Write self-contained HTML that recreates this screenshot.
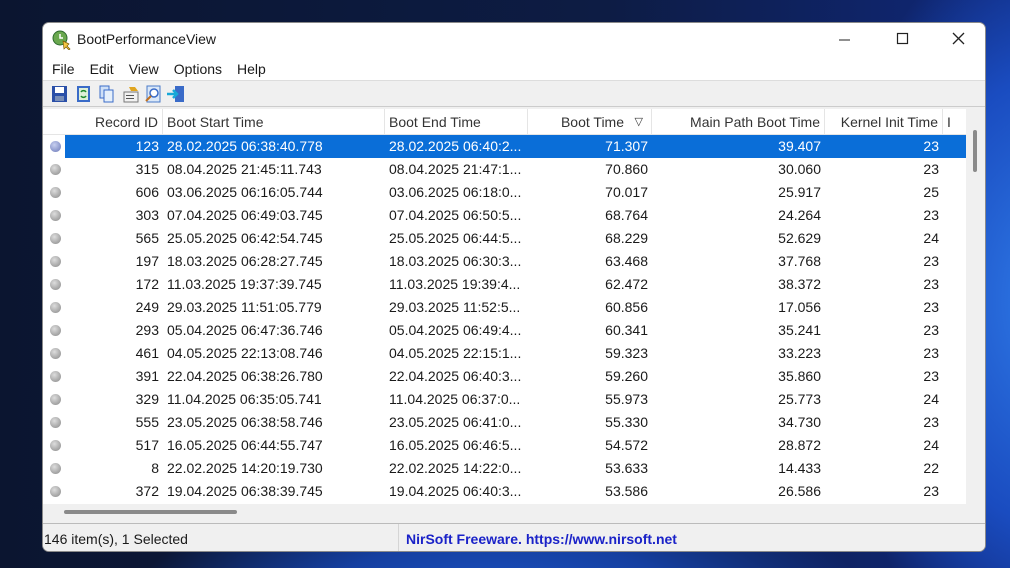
<!DOCTYPE html>
<html><head><meta charset="utf-8"><style>
*{margin:0;padding:0;box-sizing:border-box}
body{width:1010px;height:568px;overflow:hidden;position:relative;font-family:"Liberation Sans",sans-serif;font-size:14px;color:#1a1a1a;
background:radial-gradient(ellipse 300px 500px at 1050px 300px,#2f7ae8 0%,#1a4cc0 45%,transparent 75%),radial-gradient(ellipse 500px 200px at 500px 620px,#1e5ad0 0%,#153fa0 40%,transparent 75%),linear-gradient(90deg,#0b1530 0%,#0d1c44 60%,#10287a 100%);}
.win{position:absolute;left:42px;top:22px;width:944px;height:530px;background:#f0f0f0;border:1px solid #8a8a8a;border-radius:7px;overflow:hidden}
.title{height:34px;background:#fff;position:relative}
.title span{position:absolute;left:34px;top:8px;font-size:14px}
.menu{height:24px;background:#fff;border-bottom:1px solid #ddd;font-size:14px}
.menu span{display:inline-block;margin-left:9px;margin-right:6px;line-height:24px}
.tb{height:26px;background:#f0f0f0;border-bottom:1px solid #ccc;position:relative}
.list{position:absolute;left:0;top:86px;width:923px;height:395px;background:#fff;overflow:hidden}
.hdr{height:26px;border-bottom:1px solid #e5e5e5;position:relative;background:#fff}
.c{position:absolute;white-space:nowrap;top:0;height:23px;line-height:23px}
.hdr .c{height:26px;line-height:26px;border-right:1px solid #e5e5e5;padding:0 4px;color:#333}
.row{position:relative;height:23px}
.sel{background:#0a6ed8;color:#fff;position:absolute;left:22px;right:0;top:0;bottom:0}
.r{text-align:right}
.dot{position:absolute;left:7px;top:6px;width:11px;height:11px;border-radius:50%;background:radial-gradient(circle at 40% 35%,#ddd,#888);}
.vs{position:absolute;left:923px;top:86px;width:21px;height:395px;background:#f0f0f0}
.hs{position:absolute;left:0;top:481px;width:944px;height:20px;background:#f0f0f0;border-bottom:1px solid #bbb}
.status{position:absolute;left:0;top:501px;width:944px;height:29px;background:#f0f0f0}
</style></head><body>
<div class="win">
<div class="title">
<svg style="position:absolute;left:9px;top:7px" width="20" height="20"><circle cx="8" cy="8" r="7" fill="#6aa84f" stroke="#2d6a2d"/><path d="M8 4v4h3" stroke="#fff" stroke-width="1.5" fill="none"/><path d="M11 11l6 3-2 2 3 3-1 1-3-3-2 2z" fill="#f4c542" stroke="#7a5a00" stroke-width=".7"/></svg>
<span>BootPerformanceView</span>
<svg style="position:absolute;left:795px;top:10px" width="14" height="14"><path d="M1 7h11" stroke="#222"/></svg>
<svg style="position:absolute;left:853px;top:9px" width="14" height="14"><rect x="1.5" y="1.5" width="10" height="10" fill="none" stroke="#222" stroke-width="1.2"/></svg>
<svg style="position:absolute;left:909px;top:9px" width="14" height="14"><path d="M1 1l11 11M12 1L1 12" stroke="#222" stroke-width="1.3"/></svg>
</div>
<div class="menu"><span>File</span><span>Edit</span><span>View</span><span>Options</span><span>Help</span></div>
<div class="tb">
<svg style="position:absolute;left:8px;top:4px" width="160" height="18">
<rect x="1" y="1" width="15" height="16" fill="#2a4fa8"/><rect x="4" y="2" width="9" height="6" fill="#fff"/><rect x="4" y="11" width="9" height="5" fill="#7a8fb8"/>
<rect x="26" y="1" width="13" height="16" fill="#3a6bc8"/><rect x="28" y="3" width="9" height="12" fill="#dff0d8"/><path d="M30 7a3 3 0 0 1 5 0M35 11a3 3 0 0 1-5 0" stroke="#1f8a2e" stroke-width="1.5" fill="none"/>
<rect x="49" y="1" width="9" height="12" fill="#cfe0f7" stroke="#3a6bc8"/><rect x="53" y="5" width="9" height="12" fill="#e6f0fb" stroke="#3a6bc8"/>
<rect x="73" y="7" width="14" height="10" fill="#f2f2f2" stroke="#777"/><path d="M78 2l6 0 3 4-7 0z" fill="#e0a520"/><rect x="75" y="10" width="8" height="1" fill="#555"/><rect x="75" y="13" width="8" height="1" fill="#555"/>
<rect x="96" y="1" width="13" height="16" fill="#dbe8f8" stroke="#4a7ac8"/><circle cx="103" cy="8" r="4" fill="#fff" stroke="#3a6bc8" stroke-width="1.5"/><path d="M100 11l-5 5" stroke="#c07020" stroke-width="2"/>
<rect x="124" y="1" width="9" height="16" fill="#3a6bc8"/><path d="M116 9h10M122 5l4 4-4 4" stroke="#18a8d8" stroke-width="2.5" fill="none"/>
</svg>
</div>
<div class="list">
<div class="hdr">
<div class="c" style="left:0;width:22px;border:none"></div>
<div class="c r" style="left:22px;width:98px">Record ID</div>
<div class="c" style="left:120px;width:222px">Boot Start Time</div>
<div class="c" style="left:342px;width:143px">Boot End Time</div>
<div class="c r" style="left:485px;width:124px;padding-right:27px">Boot Time<span style="position:absolute;right:8px;top:0;font-size:11px">▽</span></div>
<div class="c r" style="left:609px;width:173px">Main Path Boot Time</div>
<div class="c r" style="left:782px;width:118px">Kernel Init Time</div>
<div class="c" style="left:900px;width:40px;border:none">I</div>
</div>
<div id="rows"></div>
</div>
<div class="vs"><div style="position:absolute;left:7px;top:21px;width:4px;height:42px;background:#8a8a8a;border-radius:2px"></div></div>
<div class="hs"><div style="position:absolute;left:21px;top:6px;width:173px;height:4px;background:#8a8a8a;border-radius:2px"></div></div>
<div class="status">
<div style="position:absolute;left:1px;top:7px">146 item(s), 1 Selected</div>
<div style="position:absolute;left:355px;top:0;width:1px;height:29px;background:#d5d5d5"></div>
<div style="position:absolute;left:363px;top:7px;color:#1a22c8;font-weight:bold">NirSoft Freeware. https://www.nirsoft.net</div>
</div>
</div>
<script>
var d=[["123","28.02.2025 06:38:40.778","28.02.2025 06:40:2...","71.307","39.407","23"],
["315","08.04.2025 21:45:11.743","08.04.2025 21:47:1...","70.860","30.060","23"],
["606","03.06.2025 06:16:05.744","03.06.2025 06:18:0...","70.017","25.917","25"],
["303","07.04.2025 06:49:03.745","07.04.2025 06:50:5...","68.764","24.264","23"],
["565","25.05.2025 06:42:54.745","25.05.2025 06:44:5...","68.229","52.629","24"],
["197","18.03.2025 06:28:27.745","18.03.2025 06:30:3...","63.468","37.768","23"],
["172","11.03.2025 19:37:39.745","11.03.2025 19:39:4...","62.472","38.372","23"],
["249","29.03.2025 11:51:05.779","29.03.2025 11:52:5...","60.856","17.056","23"],
["293","05.04.2025 06:47:36.746","05.04.2025 06:49:4...","60.341","35.241","23"],
["461","04.05.2025 22:13:08.746","04.05.2025 22:15:1...","59.323","33.223","23"],
["391","22.04.2025 06:38:26.780","22.04.2025 06:40:3...","59.260","35.860","23"],
["329","11.04.2025 06:35:05.741","11.04.2025 06:37:0...","55.973","25.773","24"],
["555","23.05.2025 06:38:58.746","23.05.2025 06:41:0...","55.330","34.730","23"],
["517","16.05.2025 06:44:55.747","16.05.2025 06:46:5...","54.572","28.872","24"],
["8","22.02.2025 14:20:19.730","22.02.2025 14:22:0...","53.633","14.433","22"],
["372","19.04.2025 06:38:39.745","19.04.2025 06:40:3...","53.586","26.586","23"]];
var h="";d.forEach(function(r,i){h+='<div class="row">'+(i==0?'<div class="sel"></div>':'')+'<div class="dot"'+(i==0?' style="background:radial-gradient(circle at 40% 35%,#c8d0f0,#6a78b8)"':'')+'></div>'+
'<div class="c r" style="left:22px;width:94px'+(i==0?';color:#fff':'')+'">'+r[0]+'</div>'+
'<div class="c" style="left:124px'+(i==0?';color:#fff':'')+'">'+r[1]+'</div>'+
'<div class="c" style="left:346px'+(i==0?';color:#fff':'')+'">'+r[2]+'</div>'+
'<div class="c r" style="left:485px;width:120px'+(i==0?';color:#fff':'')+'">'+r[3]+'</div>'+
'<div class="c r" style="left:609px;width:169px'+(i==0?';color:#fff':'')+'">'+r[4]+'</div>'+
'<div class="c r" style="left:782px;width:114px'+(i==0?';color:#fff':'')+'">'+r[5]+'</div></div>';});
document.getElementById("rows").innerHTML=h;
</script>
</body></html>
